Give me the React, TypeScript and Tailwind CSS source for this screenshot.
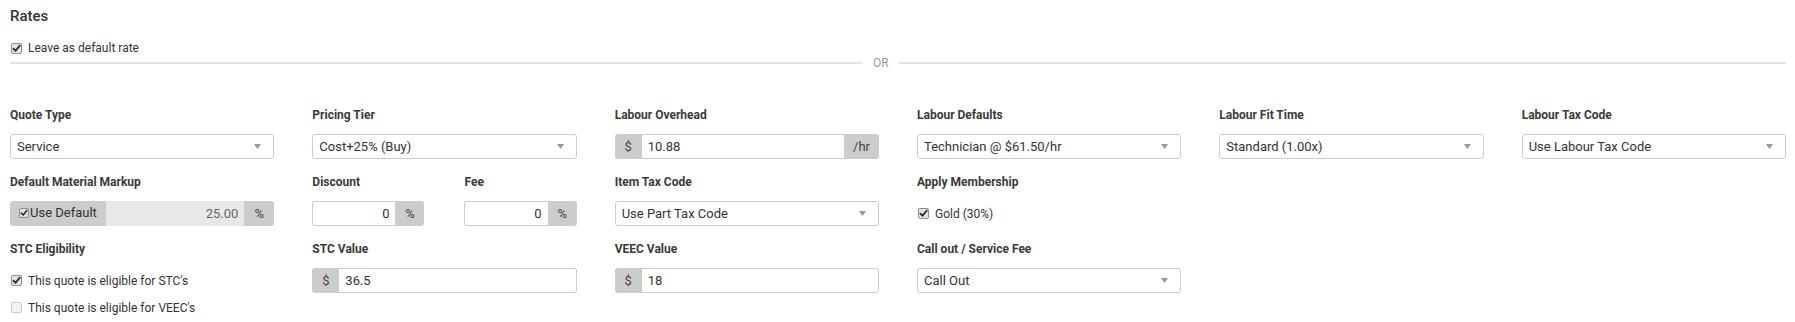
import React from 'react';

function Tick({ className }: { className: string }) {
  return (
    <svg viewBox="0 0 10 10" className={className}>
      <path d="M1.6 5.2 L4 7.6 L8.6 1.8" fill="none" stroke="#2b2b2b" strokeWidth="1.9" strokeLinecap="round" strokeLinejoin="round" />
    </svg>
  );
}

function CheckBox({ checked, small }: { checked: boolean; small?: boolean }) {
  const size = small ? 'w-[10px] h-[10px]' : 'w-[11px] h-[11px] ml-[1px]';
  return (
    <span
      className={`${size} shrink-0 rounded-[2px] border flex items-center justify-center ${
        checked ? 'border-[#8f8f8f] bg-[#e2e2e2]' : 'border-[#c9c9c9] bg-[#f3f3f3]'
      }`}
    >
      {checked && <Tick className={small ? 'w-[8px] h-[8px]' : 'w-[9px] h-[9px]'} />}
    </span>
  );
}

function CheckRow({ label, checked }: { label: string; checked: boolean }) {
  return (
    <label className="flex items-center gap-[6px] h-[25px] text-[12px] text-[#333]">
      <CheckBox checked={checked} />
      <span>{label}</span>
    </label>
  );
}

function FieldLabel({ children }: { children: React.ReactNode }) {
  return <div className="h-[17px] leading-[17px] text-[12px] font-bold text-[#3a3a3a] mb-[10px] whitespace-nowrap">{children}</div>;
}

function Select({ value }: { value: string }) {
  return (
    <div className="h-[25px] flex items-center justify-between border border-[#cccccc] rounded-[3px] bg-white pl-[6px] pr-[12px] text-[13px] text-[#333]">
      <span>{value}</span>
      <svg viewBox="0 0 7 5" className="w-[7px] h-[5px]">
        <path d="M0 0 H7 L3.5 5 Z" fill="#9a9a9a" />
      </svg>
    </div>
  );
}

function Addon({ children, className }: { children: React.ReactNode; className: string }) {
  return (
    <span className={`shrink-0 flex items-center justify-center bg-[#cccccc] text-[13px] text-[#444] ${className}`}>{children}</span>
  );
}

function MoneyInput({ value, suffix }: { value: string; suffix?: string }) {
  return (
    <div className="flex h-[25px]">
      <Addon className="w-[27px] rounded-l-[3px]">$</Addon>
      <input
        readOnly
        value={value}
        className={`min-w-0 flex-1 border border-l-0 border-[#cccccc] bg-white pl-[6px] text-[13px] text-[#333] outline-none ${
          suffix ? 'border-r-0' : 'rounded-r-[3px]'
        }`}
      />
      {suffix && <Addon className="w-[35px] rounded-r-[3px]">{suffix}</Addon>}
    </div>
  );
}

function PercentInput({ value }: { value: string }) {
  return (
    <div className="flex h-[25px]">
      <input
        readOnly
        value={value}
        className="min-w-0 flex-1 border border-r-0 border-[#cccccc] rounded-l-[3px] bg-white pr-[6px] text-right text-[13px] text-[#333] outline-none"
      />
      <Addon className="w-[29px] rounded-r-[3px]">%</Addon>
    </div>
  );
}

function Field({ label, children }: { label: string; children: React.ReactNode }) {
  return (
    <div>
      <FieldLabel>{label}</FieldLabel>
      {children}
    </div>
  );
}

export default function App() {
  return (
    <div className="w-[1795px] h-[322px] overflow-hidden bg-white pl-[10px] pr-[9px] font-['Roboto',sans-serif] text-[#333]">
      <h3 className="pt-[6px] text-[15px] leading-[20px] font-medium text-[#333]">Rates</h3>

      <label className="mt-[14px] flex items-center gap-[6px] h-[16px] text-[12px]">
        <CheckBox checked />
        <span>Leave as default rate</span>
      </label>

      <div className="flex items-center h-[14px]">
        <div className="h-[2px] w-[853px] bg-[#e3e3e3]" />
        <span className="px-[10px] text-[12px] leading-[14px] text-[#9b9b9b]">OR</span>
        <div className="h-[2px] flex-1 bg-[#e3e3e3]" />
      </div>

      <div className="mt-[37px] grid grid-cols-6 gap-x-[38px] gap-y-[15px]">
        <Field label="Quote Type">
          <Select value="Service" />
        </Field>
        <Field label="Pricing Tier">
          <Select value="Cost+25% (Buy)" />
        </Field>
        <Field label="Labour Overhead">
          <MoneyInput value="10.88" suffix="/hr" />
        </Field>
        <Field label="Labour Defaults">
          <Select value="Technician @ $61.50/hr" />
        </Field>
        <Field label="Labour Fit Time">
          <Select value="Standard (1.00x)" />
        </Field>
        <Field label="Labour Tax Code">
          <Select value="Use Labour Tax Code" />
        </Field>

        <Field label="Default Material Markup">
          <div className="flex h-[25px]">
            <span className="w-[96px] shrink-0 flex items-center gap-[1px] bg-[#cccccc] rounded-l-[3px] pl-[9px] pb-[2px] text-[13px] text-[#333]">
              <CheckBox checked small />
              <span>Use Default</span>
            </span>
            <input
              readOnly
              value="25.00"
              className="min-w-0 flex-1 bg-[#e8e8e8] pr-[6px] text-right text-[13px] text-[#666] outline-none"
            />
            <Addon className="w-[30px] rounded-r-[3px]">%</Addon>
          </div>
        </Field>
        <div className="grid grid-cols-2 gap-x-[40px]">
          <Field label="Discount">
            <PercentInput value="0" />
          </Field>
          <Field label="Fee">
            <PercentInput value="0" />
          </Field>
        </div>
        <Field label="Item Tax Code">
          <Select value="Use Part Tax Code" />
        </Field>
        <Field label="Apply Membership">
          <CheckRow label="Gold (30%)" checked />
        </Field>
        <div className="col-span-2" />

        <Field label="STC Eligibility">
          <CheckRow label="This quote is eligible for STC's" checked />
          <div className="mt-[2px]">
            <CheckRow label="This quote is eligible for VEEC's" checked={false} />
          </div>
        </Field>
        <Field label="STC Value">
          <MoneyInput value="36.5" />
        </Field>
        <Field label="VEEC Value">
          <MoneyInput value="18" />
        </Field>
        <Field label="Call out / Service Fee">
          <Select value="Call Out" />
        </Field>
      </div>
    </div>
  );
}
